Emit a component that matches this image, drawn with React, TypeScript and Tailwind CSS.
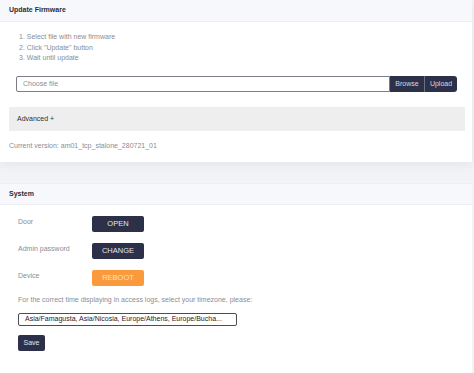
import React from "react";

const font = { fontFamily: '"Liberation Sans", Arial, sans-serif' };

const steps = ["Select file with new firmware", 'Click "Update" button', "Wait until update"];

const rows = [
  { label: "Door", action: "OPEN", tone: "dark" },
  { label: "Admin password", action: "CHANGE", tone: "dark" },
  { label: "Device", action: "REBOOT", tone: "warn" },
];

export default function App() {
  return (
    <div className="w-[474px] h-[373px] overflow-hidden bg-[#f2f3f6] text-[7px]" style={font}>
      {/* Update firmware card */}
      <div className="w-[472px] bg-white shadow-[0_3px_10px_rgba(0,0,0,0.06)]">
        <div className="h-[22px] flex items-center px-[9px] bg-[#f7f8fb] border-b border-[#eceef3] font-bold text-[#2b2f3a]">
          Update Firmware
        </div>
        <ol className="pt-[10px] pl-[19px] text-[#8a8d96] leading-[10.6px]">
          {steps.map((s, i) => (
            <li key={s}>
              {i + 1}. {s}
            </li>
          ))}
        </ol>
        <div className="flex mt-[12px] ml-[16px] mr-[15px] h-[16px]">
          <div className="flex-1 flex items-center pl-[6px] border border-[#7a7d86] rounded-l-[2px] text-[#8a8d96]">
            Choose file
          </div>
          <button className="w-[35px] bg-[#2c3049] text-[#d6d9e3] border-r border-[#6d7185]">Browse</button>
          <button className="w-[32px] bg-[#2c3049] text-[#d6d9e3] rounded-r-[3px]">Upload</button>
        </div>
        <div className="mt-[15px] ml-[9px] mr-[7px] h-[24px] bg-[#eeeeee] flex items-center pl-[8px] text-[#2b2f3a]">
          Advanced +
        </div>
        <div className="h-[31px] flex items-center px-[9px] text-[#8a8d96]">
          Current version: am01_tcp_stalone_280721_01
        </div>
      </div>

      {/* System card */}
      <div className="w-[472px] mt-[21px] bg-white h-[200px]">
        <div className="h-[22px] flex items-center px-[9px] bg-[#f7f8fb] border-y border-[#eceef3] font-bold text-[#2b2f3a]">
          System
        </div>
        <div className="px-[18px] pt-[11px]">
          <div className="flex flex-col gap-[11px]">
            {rows.map((r) => (
              <div key={r.label} className="flex items-start">
                <div className="w-[74px] text-[#8a8d96] leading-[10px] pt-[1px]">{r.label}</div>
                <button
                  className={
                    r.tone === "warn"
                      ? "w-[52px] h-[16px] rounded-[2px] bg-[#fb9a3c] text-[#fde0bf] text-[7.5px]"
                      : "w-[52px] h-[16px] rounded-[2px] bg-[#2c3049] text-[#e3e6ef] text-[7.5px]"
                  }
                >
                  {r.action}
                </button>
              </div>
            ))}
          </div>
          <p className="mt-[9px] text-[#8a8d96] leading-[10px]">
            For the correct time displaying in access logs, select your timezone, please:
          </p>
          <div className="mt-[8px] w-[219px] h-[13px] flex items-center pl-[6px] border border-[#4a4d57] rounded-[2px] text-[#1f222b] overflow-hidden whitespace-nowrap">
            Asia/Famagusta, Asia/Nicosia, Europe/Athens, Europe/Bucha...
          </div>
          <button className="mt-[9px] w-[27px] h-[16px] rounded-[2px] bg-[#2c3049] text-[#e3e6ef]">Save</button>
        </div>
      </div>
    </div>
  );
}
